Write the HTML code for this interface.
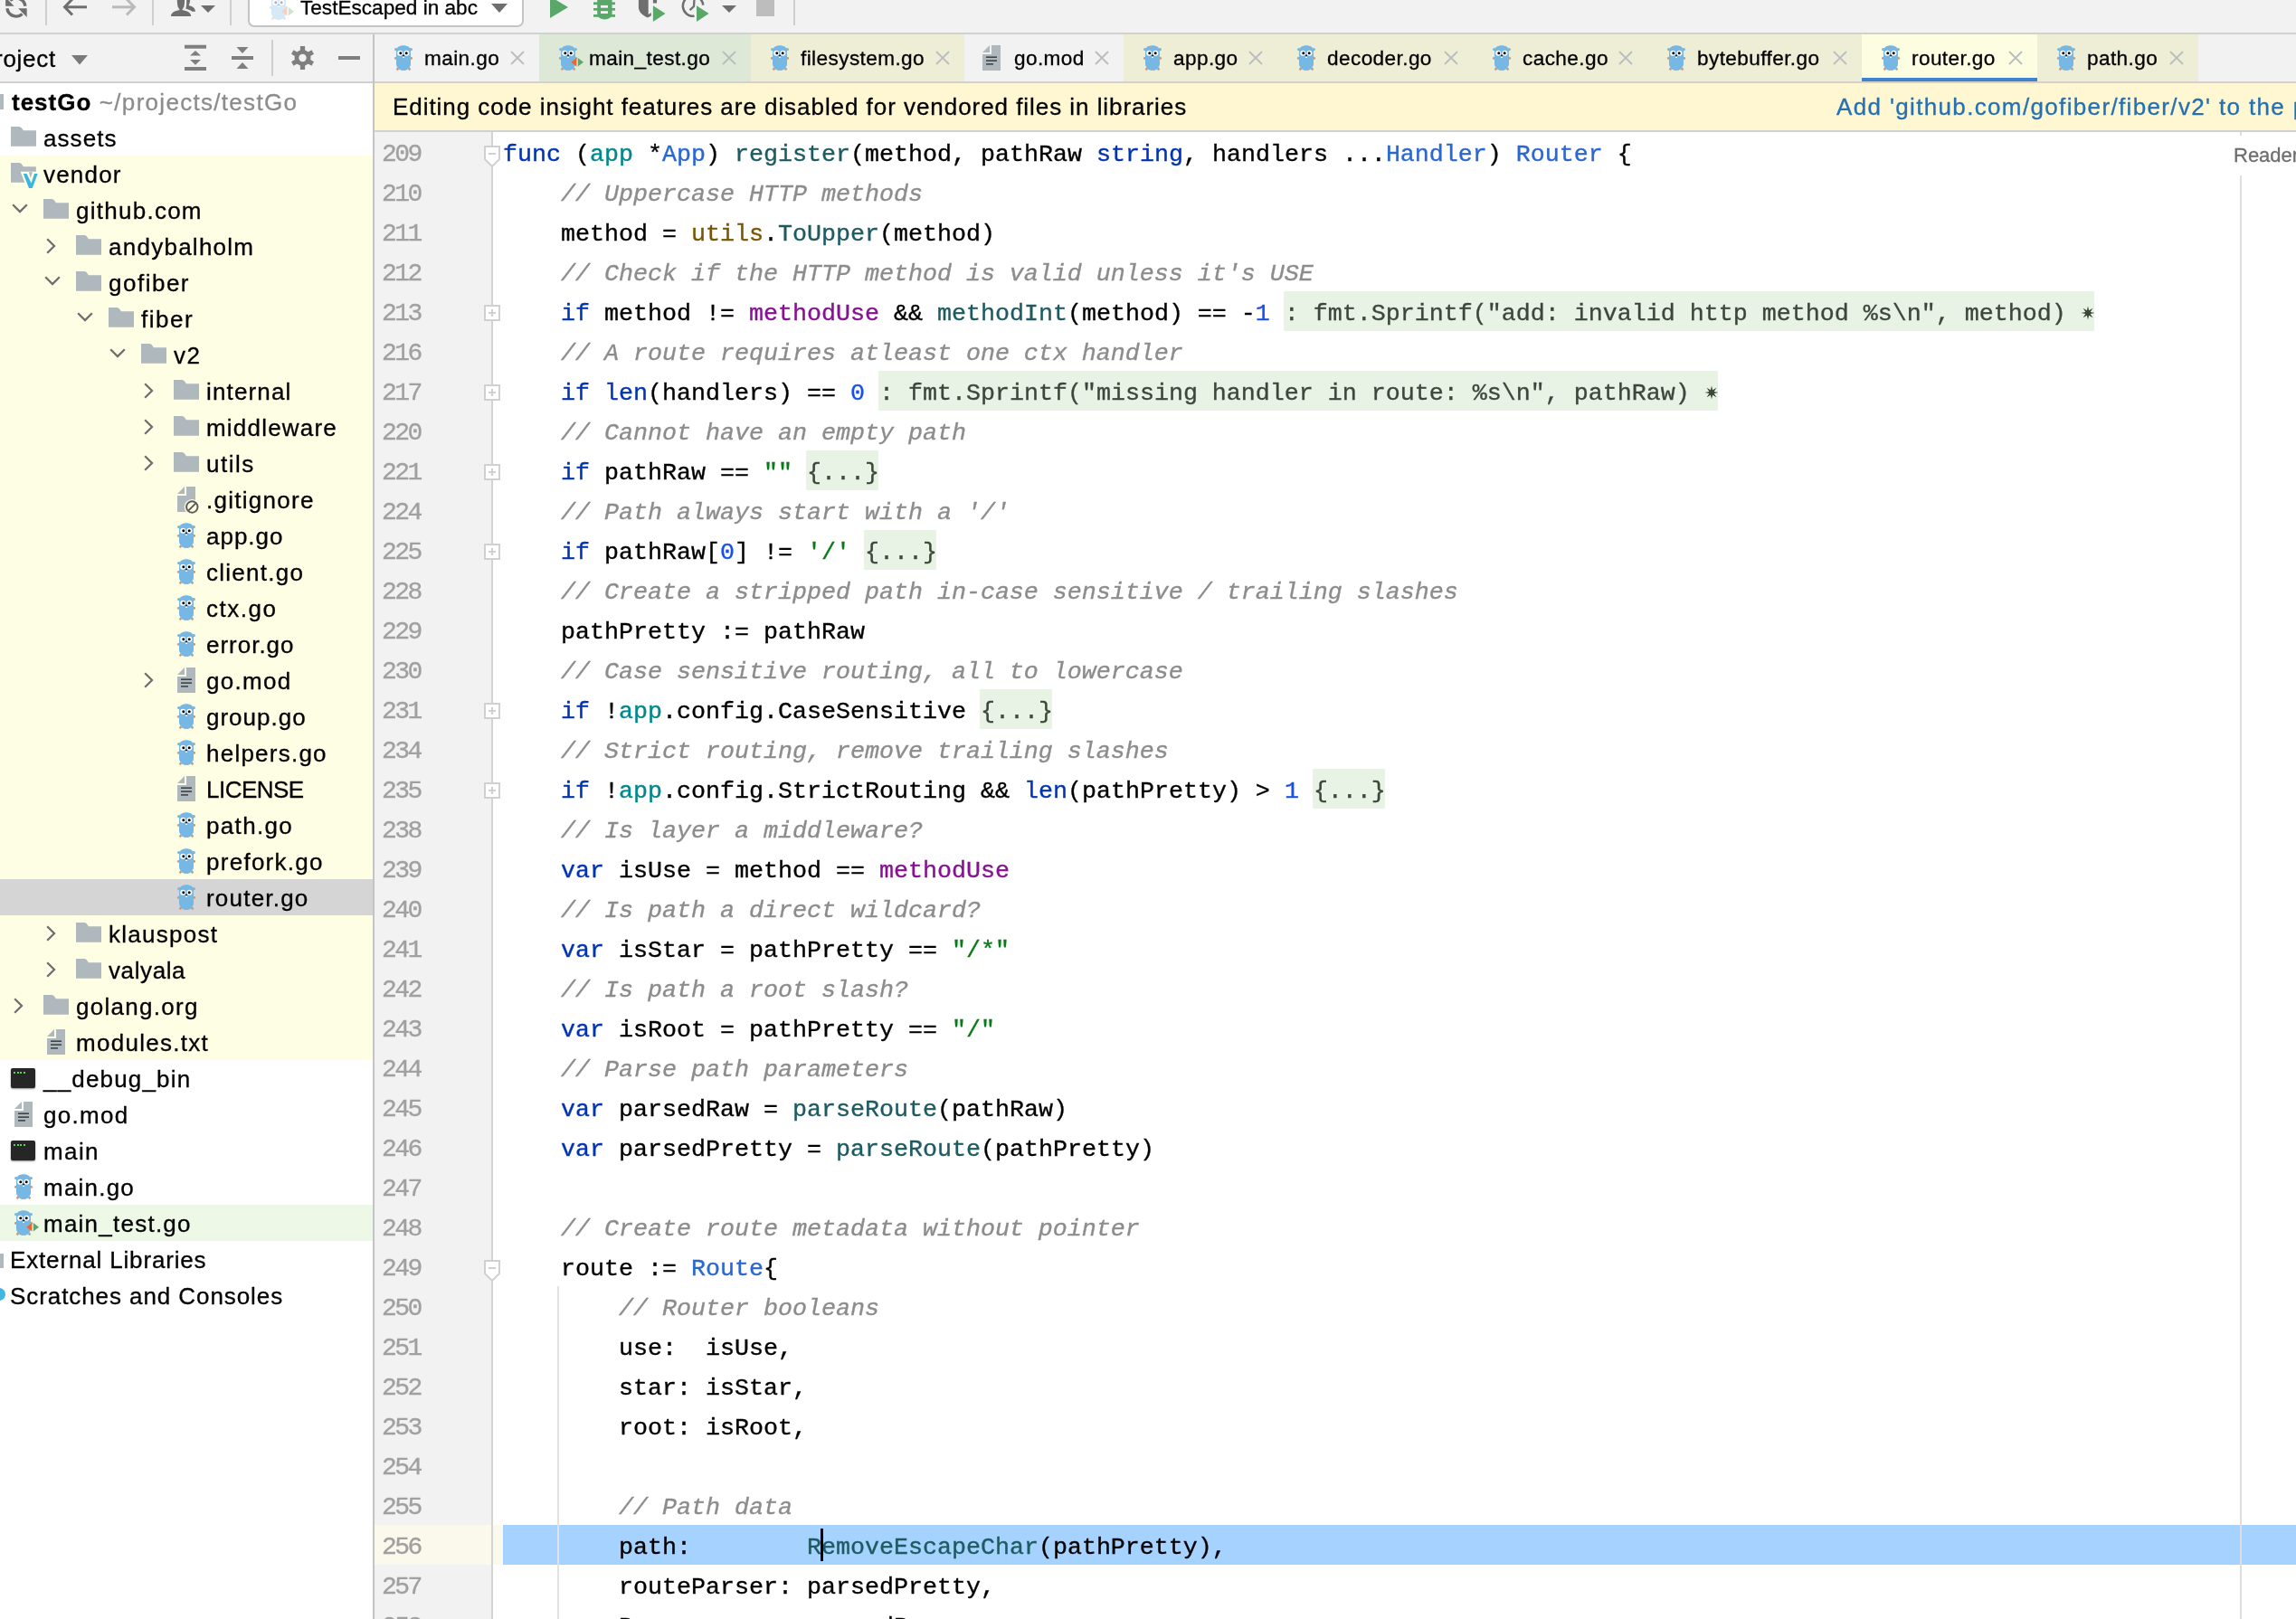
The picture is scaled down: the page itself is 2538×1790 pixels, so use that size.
<!DOCTYPE html><html><head><meta charset="utf-8"><style>
*{box-sizing:border-box;margin:0;padding:0}
html,body{width:2538px;height:1790px;overflow:hidden;background:#f2f2f2}
body{position:relative;font-family:"Liberation Sans",sans-serif;color:#000;-webkit-text-stroke:0.3px currentColor}
.abs{position:absolute}
.tr{position:absolute;left:0;width:412px;height:40px}
.tt{position:absolute;top:0;line-height:42px;font-size:26px;letter-spacing:1.2px;white-space:pre}
.tab{position:absolute;top:38px;height:52px}
.tabt{position:absolute;top:0;line-height:54px;font-size:22.6px;letter-spacing:0.4px;white-space:pre}
.code{position:absolute;left:556px;-webkit-text-stroke:0.35px currentColor;height:44px;line-height:50px;font-family:"Liberation Mono",monospace;font-size:26.667px;white-space:pre;color:#000}
.ln{position:absolute;left:414px;width:70px;height:44px;line-height:49px;font-family:"Liberation Mono",monospace;font-size:28px;letter-spacing:-2.6px;color:#a0a0a0;text-align:left;padding-left:8px}
.k{color:#0033b3}.c{color:#8c8c8c;font-style:italic}.s{color:#067d17}.n{color:#1750eb}
.f{color:#1e5b60}.r{color:#00878c}.t{color:#2a67d1}.p{color:#7a5500}.m{color:#871094}
.fold{position:absolute;height:44px;background:#e8f2e5}
.fd{color:#3c473c}
.close{position:absolute;width:16px;height:16px}
</style></head><body><div style="position:absolute;left:0;top:0;width:2538px;height:1790px;overflow:hidden;will-change:transform;background:#f2f2f2">
<div class="abs" style="left:0;top:0;width:2538px;height:36px;background:#f2f2f2"></div>
<div class="abs" style="left:0;top:36px;width:2538px;height:2px;background:#d1d1d1"></div>
<svg class="abs" style="left:0;top:-6px" width="32" height="32" viewBox="0 -6 32 32"><path d="M7.9,9.3 A10,10 0 0 0 24.6,15.4" fill="none" stroke="#6e6e6e" stroke-width="3.4"/><path d="M20.2,9.3 L29.7,9.3 L29.7,19 Z" fill="#6e6e6e"/><path d="M27.9,6.7 A10,10 0 0 0 11.2,0.6" fill="none" stroke="#6e6e6e" stroke-width="3.4"/><path d="M15.6,6.7 L6.1,6.7 L6.1,-3 Z" fill="#6e6e6e"/></svg>
<div class="abs" style="left:50px;top:0;width:2px;height:28px;background:#cfcfcf"></div>
<svg class="abs" style="left:69px;top:-3px" width="28" height="21" viewBox="0 0 28 21"><path d="M27,10.8 L4,10.8" stroke="#6e6e6e" stroke-width="3"/><path d="M11,2 L2.5,10.8 L11,19.5" fill="none" stroke="#6e6e6e" stroke-width="3"/></svg>
<svg class="abs" style="left:123px;top:-3px" width="28" height="21" viewBox="0 0 28 21"><path d="M1,10.8 L24,10.8" stroke="#bababa" stroke-width="3"/><path d="M17,2 L25.5,10.8 L17,19.5" fill="none" stroke="#bababa" stroke-width="3"/></svg>
<div class="abs" style="left:168px;top:0;width:2px;height:28px;background:#cfcfcf"></div>
<svg class="abs" style="left:180px;top:0" width="40" height="22" viewBox="0 0 40 22"><path d="M26.2,-2 L30.2,-2 C30.2,2 29.5,4.5 28.6,6 C33,7 35.8,9 36,12.7 L32.4,12.7 C31,11.5 28,10.5 25.2,9.6 C26,7.5 26.2,5 26.2,2 Z" fill="#6e6e6e"/><path d="M8.1,18.6 C8.1,14 11,11.5 17.5,10.5 C16,8.5 15.1,6 15.1,2 L15.1,-2 L24.8,-2 L24.8,2 C24.8,6 24,8.5 22.5,10.5 C29,11.5 32,14 32,18.6 Z" fill="#6e6e6e" stroke="#f2f2f2" stroke-width="1.4"/></svg>
<svg class="abs" style="left:222px;top:6px" width="16" height="8" viewBox="0 0 16 8"><path d="M0,0 L16,0 L8,8 Z" fill="#6e6e6e"/></svg>
<div class="abs" style="left:254px;top:0;width:2px;height:28px;background:#cfcfcf"></div>
<div class="abs" style="left:274px;top:-10px;width:305px;height:40px;background:#fff;border:2px solid #c4c4c4;border-radius:7px"></div>
<svg width="28" height="28" viewBox="0 0 28 28" style="opacity:0.3;position:absolute;left:298px;top:-6px">
<circle cx="1.7" cy="4.6" r="1.7" fill="#76b8e3"/><circle cx="18.3" cy="4.6" r="1.7" fill="#76b8e3"/>
<path d="M2.2,5 C3,1.6 6.5,0.4 10,0.4 C13.5,0.4 17,1.6 17.8,5 L18,19 C18,24.5 14.5,27.8 10,27.8 C5.5,27.8 2,24.5 2,19 Z" fill="#76b8e3"/>
<circle cx="1.3" cy="14.4" r="1.4" fill="#c4997f"/><circle cx="18.7" cy="14.4" r="1.4" fill="#c4997f"/>
<circle cx="3.4" cy="26.4" r="1.4" fill="#c4997f"/><circle cx="16.6" cy="26.4" r="1.4" fill="#c4997f"/>
<path d="M2.2,5 C3,1.6 6.5,0.4 10,0.4 C13.5,0.4 17,1.6 17.8,5 L18,19 C18,24.5 14.5,27.8 10,27.8 C5.5,27.8 2,24.5 2,19 Z" fill="#76b8e3"/>
<circle cx="6.2" cy="8.8" r="3" fill="#fff"/><circle cx="13.4" cy="8.8" r="3" fill="#fff"/>
<circle cx="6.8" cy="8.8" r="1.5" fill="#000"/><circle cx="13.2" cy="8.8" r="1.5" fill="#000"/>
<rect x="9.1" y="12" width="1.8" height="2" fill="#fff"/>
<ellipse cx="10" cy="11.5" rx="1.2" ry="0.9" fill="#222"/>
<path d="M19.4,14 L13.3,18.8 L19.4,23.6 Z" fill="#e8672e"/><path d="M20.8,14 L27,18.8 L20.8,23.6 Z" fill="#59a869"/></svg>
<div class="abs" style="left:332px;top:-4px;line-height:26px;font-size:22.6px;letter-spacing:0px;white-space:pre">TestEscaped in abc</div>
<svg class="abs" style="left:543px;top:4px" width="18" height="10" viewBox="0 0 18 10"><path d="M0,0 L18,0 L9,10 Z" fill="#6e6e6e"/></svg>
<svg class="abs" style="left:607px;top:-4px" width="22" height="24" viewBox="0 0 22 24"><path d="M1,0 L21,12 L1,24 Z" fill="#59a869"/></svg>
<svg class="abs" style="left:656px;top:-4px" width="25" height="27" viewBox="0 0 25 27"><path d="M4.2,3 C4.2,-2 20.6,-2 20.6,3 L20.6,19 C20.6,27.5 4.2,27.5 4.2,19 Z" fill="#59a869"/><rect x="0" y="6.4" width="24" height="2.8" fill="#59a869"/><rect x="0" y="13" width="24" height="2.6" fill="#59a869"/><rect x="0" y="20" width="24" height="2.8" fill="#59a869"/><rect x="8" y="9.9" width="8" height="2.8" fill="#f2f2f2"/><rect x="8" y="16.2" width="8" height="2.8" fill="#f2f2f2"/></svg>
<svg class="abs" style="left:705px;top:-6px" width="32" height="31" viewBox="0 0 32 31"><path d="M0.9,0 L21.1,0 L21.1,9.5 L16.9,9.5 L16.9,3.7 L11.7,3.7 L11.7,22 L14.8,19.9 L14.8,23.5 L10.9,25.5 C5,23 0.9,19 0.9,14 Z" fill="#6e6e6e"/><path d="M16.9,12.3 L30.5,21.1 L16.9,30 Z" fill="#59a869"/></svg>
<svg class="abs" style="left:753px;top:-6px" width="32" height="31" viewBox="0 0 32 31"><path d="M14.5,23.7 A11.2,11.2 0 1 1 24.2,11.6" fill="none" stroke="#6e6e6e" stroke-width="2.5"/><path d="M14.5,5 L14,13 L9.6,17.1" fill="none" stroke="#6e6e6e" stroke-width="2.3"/><path d="M17,12.3 L30.6,21.1 L17,30 Z" fill="#59a869"/></svg>
<svg class="abs" style="left:798px;top:6px" width="16" height="8" viewBox="0 0 16 8"><path d="M0,0 L16,0 L8,8 Z" fill="#6e6e6e"/></svg>
<div class="abs" style="left:836px;top:-2px;width:20px;height:20px;background:#bdbdbd"></div>
<div class="abs" style="left:877px;top:0;width:2px;height:28px;background:#cfcfcf"></div>
<div class="abs" style="left:0;top:38px;width:412px;height:52px;background:#f2f2f2"></div>
<div class="abs" style="left:0;top:90px;width:412px;height:2px;background:#d1d1d1"></div>
<div class="abs" style="left:-24px;top:39px;line-height:52px;font-size:26px;letter-spacing:0.7px;white-space:pre">Project</div>
<svg class="abs" style="left:79px;top:61px" width="18" height="11" viewBox="0 0 18 11"><path d="M0,0 L18,0 L9,10.5 Z" fill="#7a7a7a"/></svg>
<svg class="abs" style="left:204px;top:49px" width="24" height="29" viewBox="0 0 24 29"><rect x="0" y="0.7" width="24" height="4" fill="#7f7f7f"/><rect x="0" y="25" width="24" height="4" fill="#7f7f7f"/><path d="M12,7 L18,12.6 L6,12.6 Z" fill="#7f7f7f"/><path d="M12,22.7 L18,17 L6,17 Z" fill="#7f7f7f"/></svg>
<svg class="abs" style="left:256px;top:51px" width="24" height="26" viewBox="0 0 24 26"><rect x="0" y="11" width="24" height="4" fill="#7f7f7f"/><path d="M12,8 L18.5,1 L5.5,1 Z" fill="#7f7f7f"/><path d="M12,18 L18.5,25 L5.5,25 Z" fill="#7f7f7f"/></svg>
<div class="abs" style="left:300px;top:44px;width:2px;height:40px;background:#cfcfcf"></div>
<svg class="abs" style="left:322px;top:51px" width="25" height="26" viewBox="0 0 25 26"><g fill="#7f7f7f" transform="translate(12.5,13)"><circle r="9" /><rect x="-2.6" y="-13" width="5.2" height="26"/><rect x="-2.6" y="-13" width="5.2" height="26" transform="rotate(60)"/><rect x="-2.6" y="-13" width="5.2" height="26" transform="rotate(120)"/></g><circle cx="12.5" cy="13" r="4.2" fill="#f2f2f2"/></svg>
<div class="abs" style="left:374px;top:62px;width:24px;height:4px;background:#7f7f7f"></div>
<div class="abs" style="left:0;top:92px;width:412px;height:1698px;background:#fff"></div>
<div class="abs" style="left:0;top:172px;width:412px;height:1000px;background:#fefee4"></div>
<div class="abs" style="left:0;top:972px;width:412px;height:40px;background:#d5d5d5"></div>
<div class="abs" style="left:0;top:1332px;width:412px;height:40px;background:#eef8e7"></div>
<div class="abs" style="left:0;top:104px;width:4px;height:17px;background:#aeb8bd"></div>
<div class="tt" style="left:13px;top:92px"><b style="letter-spacing:1px">testGo</b><span style="color:#8c8c8c;letter-spacing:1.3px"> ~/projects/testGo</span></div>
<svg width="30" height="30" viewBox="0 0 30 30" style="position:absolute;left:12px;top:140px"><path d="M0,0 L9,0 C11,0 12,1 13.8,4.2 L28,4.2 L28,21.8 L0,21.8 Z" fill="#aeb8bd"/></svg>
<div class="tt" style="left:48px;top:132px;letter-spacing:1.08px">assets</div>
<svg width="30" height="30" viewBox="0 0 30 30" style="position:absolute;left:12px;top:180px"><path d="M0,0 L9,0 C11,0 12,1 13.8,4.2 L27.84,4.2 L27.84,9.67 L10.6,9.67 L15.24,21.8 L0,21.8 Z" fill="#aeb8bd"/><path d="M19.93,10.16 L23.89,10.16 L21.66,16.7 Z" fill="#aeb8bd"/><path d="M13.0,12.0 L16.7,12.0 L21.8,22.4 L25.2,12.0 L28.94,12.0 L22.89,28.08 L19.18,28.08 Z" fill="#3cb4e2" transform="translate(0.8,0)"/></svg>
<div class="tt" style="left:48px;top:172px;letter-spacing:1.2px">vendor</div>
<svg width="18" height="11" viewBox="0 0 18 11" style="position:absolute;left:13px;top:225px"><path d="M1.2,1.2 L9,9 L16.8,1.2" fill="none" stroke="#6e6e6e" stroke-width="2.3"/></svg>
<svg width="30" height="30" viewBox="0 0 30 30" style="position:absolute;left:48px;top:220px"><path d="M0,0 L9,0 C11,0 12,1 13.8,4.2 L28,4.2 L28,21.8 L0,21.8 Z" fill="#aeb8bd"/></svg>
<div class="tt" style="left:84px;top:212px;letter-spacing:1.26px">github.com</div>
<svg width="11" height="18" viewBox="0 0 11 18" style="position:absolute;left:51px;top:263px"><path d="M1.2,1.2 L9,9 L1.2,16.8" fill="none" stroke="#6e6e6e" stroke-width="2.3"/></svg>
<svg width="30" height="30" viewBox="0 0 30 30" style="position:absolute;left:84px;top:260px"><path d="M0,0 L9,0 C11,0 12,1 13.8,4.2 L28,4.2 L28,21.8 L0,21.8 Z" fill="#aeb8bd"/></svg>
<div class="tt" style="left:120px;top:252px;letter-spacing:1.26px">andybalholm</div>
<svg width="18" height="11" viewBox="0 0 18 11" style="position:absolute;left:49px;top:305px"><path d="M1.2,1.2 L9,9 L16.8,1.2" fill="none" stroke="#6e6e6e" stroke-width="2.3"/></svg>
<svg width="30" height="30" viewBox="0 0 30 30" style="position:absolute;left:84px;top:300px"><path d="M0,0 L9,0 C11,0 12,1 13.8,4.2 L28,4.2 L28,21.8 L0,21.8 Z" fill="#aeb8bd"/></svg>
<div class="tt" style="left:120px;top:292px;letter-spacing:1.5px">gofiber</div>
<svg width="18" height="11" viewBox="0 0 18 11" style="position:absolute;left:85px;top:345px"><path d="M1.2,1.2 L9,9 L16.8,1.2" fill="none" stroke="#6e6e6e" stroke-width="2.3"/></svg>
<svg width="30" height="30" viewBox="0 0 30 30" style="position:absolute;left:120px;top:340px"><path d="M0,0 L9,0 C11,0 12,1 13.8,4.2 L28,4.2 L28,21.8 L0,21.8 Z" fill="#aeb8bd"/></svg>
<div class="tt" style="left:156px;top:332px;letter-spacing:1.5px">fiber</div>
<svg width="18" height="11" viewBox="0 0 18 11" style="position:absolute;left:121px;top:385px"><path d="M1.2,1.2 L9,9 L16.8,1.2" fill="none" stroke="#6e6e6e" stroke-width="2.3"/></svg>
<svg width="30" height="30" viewBox="0 0 30 30" style="position:absolute;left:156px;top:380px"><path d="M0,0 L9,0 C11,0 12,1 13.8,4.2 L28,4.2 L28,21.8 L0,21.8 Z" fill="#aeb8bd"/></svg>
<div class="tt" style="left:192px;top:372px;letter-spacing:1.5px">v2</div>
<svg width="11" height="18" viewBox="0 0 11 18" style="position:absolute;left:159px;top:423px"><path d="M1.2,1.2 L9,9 L1.2,16.8" fill="none" stroke="#6e6e6e" stroke-width="2.3"/></svg>
<svg width="30" height="30" viewBox="0 0 30 30" style="position:absolute;left:192px;top:420px"><path d="M0,0 L9,0 C11,0 12,1 13.8,4.2 L28,4.2 L28,21.8 L0,21.8 Z" fill="#aeb8bd"/></svg>
<div class="tt" style="left:228px;top:412px;letter-spacing:1.14px">internal</div>
<svg width="11" height="18" viewBox="0 0 11 18" style="position:absolute;left:159px;top:463px"><path d="M1.2,1.2 L9,9 L1.2,16.8" fill="none" stroke="#6e6e6e" stroke-width="2.3"/></svg>
<svg width="30" height="30" viewBox="0 0 30 30" style="position:absolute;left:192px;top:460px"><path d="M0,0 L9,0 C11,0 12,1 13.8,4.2 L28,4.2 L28,21.8 L0,21.8 Z" fill="#aeb8bd"/></svg>
<div class="tt" style="left:228px;top:452px;letter-spacing:1.2px">middleware</div>
<svg width="11" height="18" viewBox="0 0 11 18" style="position:absolute;left:159px;top:503px"><path d="M1.2,1.2 L9,9 L1.2,16.8" fill="none" stroke="#6e6e6e" stroke-width="2.3"/></svg>
<svg width="30" height="30" viewBox="0 0 30 30" style="position:absolute;left:192px;top:500px"><path d="M0,0 L9,0 C11,0 12,1 13.8,4.2 L28,4.2 L28,21.8 L0,21.8 Z" fill="#aeb8bd"/></svg>
<div class="tt" style="left:228px;top:492px;letter-spacing:1.5px">utils</div>
<svg width="26" height="32" viewBox="0 0 26 32" style="position:absolute;left:196px;top:538px"><path d="M0,10 L10,10 L10,0 L20,0 L20,28 L0,28 Z" fill="#aeb8bd"/><path d="M0,8 L8,0 L8,8 Z" fill="#aeb8bd"/><circle cx="16.3" cy="22.5" r="8.6" fill="#fefee4"/><circle cx="16.3" cy="22.5" r="6.2" fill="none" stroke="#5a5a5a" stroke-width="2"/><path d="M11.9,26.9 L20.7,18.1" stroke="#5a5a5a" stroke-width="2"/></svg>
<div class="tt" style="left:228px;top:532px;letter-spacing:1.28px">.gitignore</div>
<svg width="28" height="28" viewBox="0 0 28 28" style="position:absolute;left:196px;top:578px">
<circle cx="1.7" cy="4.6" r="1.7" fill="#76b8e3"/><circle cx="18.3" cy="4.6" r="1.7" fill="#76b8e3"/>
<path d="M2.2,5 C3,1.6 6.5,0.4 10,0.4 C13.5,0.4 17,1.6 17.8,5 L18,19 C18,24.5 14.5,27.8 10,27.8 C5.5,27.8 2,24.5 2,19 Z" fill="#76b8e3"/>
<circle cx="1.3" cy="14.4" r="1.4" fill="#c4997f"/><circle cx="18.7" cy="14.4" r="1.4" fill="#c4997f"/>
<circle cx="3.4" cy="26.4" r="1.4" fill="#c4997f"/><circle cx="16.6" cy="26.4" r="1.4" fill="#c4997f"/>
<path d="M2.2,5 C3,1.6 6.5,0.4 10,0.4 C13.5,0.4 17,1.6 17.8,5 L18,19 C18,24.5 14.5,27.8 10,27.8 C5.5,27.8 2,24.5 2,19 Z" fill="#76b8e3"/>
<circle cx="6.2" cy="8.8" r="3" fill="#fff"/><circle cx="13.4" cy="8.8" r="3" fill="#fff"/>
<circle cx="6.8" cy="8.8" r="1.5" fill="#000"/><circle cx="13.2" cy="8.8" r="1.5" fill="#000"/>
<rect x="9.1" y="12" width="1.8" height="2" fill="#fff"/>
<ellipse cx="10" cy="11.5" rx="1.2" ry="0.9" fill="#222"/>
</svg>
<div class="tt" style="left:228px;top:572px;letter-spacing:0.98px">app.go</div>
<svg width="28" height="28" viewBox="0 0 28 28" style="position:absolute;left:196px;top:618px">
<circle cx="1.7" cy="4.6" r="1.7" fill="#76b8e3"/><circle cx="18.3" cy="4.6" r="1.7" fill="#76b8e3"/>
<path d="M2.2,5 C3,1.6 6.5,0.4 10,0.4 C13.5,0.4 17,1.6 17.8,5 L18,19 C18,24.5 14.5,27.8 10,27.8 C5.5,27.8 2,24.5 2,19 Z" fill="#76b8e3"/>
<circle cx="1.3" cy="14.4" r="1.4" fill="#c4997f"/><circle cx="18.7" cy="14.4" r="1.4" fill="#c4997f"/>
<circle cx="3.4" cy="26.4" r="1.4" fill="#c4997f"/><circle cx="16.6" cy="26.4" r="1.4" fill="#c4997f"/>
<path d="M2.2,5 C3,1.6 6.5,0.4 10,0.4 C13.5,0.4 17,1.6 17.8,5 L18,19 C18,24.5 14.5,27.8 10,27.8 C5.5,27.8 2,24.5 2,19 Z" fill="#76b8e3"/>
<circle cx="6.2" cy="8.8" r="3" fill="#fff"/><circle cx="13.4" cy="8.8" r="3" fill="#fff"/>
<circle cx="6.8" cy="8.8" r="1.5" fill="#000"/><circle cx="13.2" cy="8.8" r="1.5" fill="#000"/>
<rect x="9.1" y="12" width="1.8" height="2" fill="#fff"/>
<ellipse cx="10" cy="11.5" rx="1.2" ry="0.9" fill="#222"/>
</svg>
<div class="tt" style="left:228px;top:612px;letter-spacing:1.26px">client.go</div>
<svg width="28" height="28" viewBox="0 0 28 28" style="position:absolute;left:196px;top:658px">
<circle cx="1.7" cy="4.6" r="1.7" fill="#76b8e3"/><circle cx="18.3" cy="4.6" r="1.7" fill="#76b8e3"/>
<path d="M2.2,5 C3,1.6 6.5,0.4 10,0.4 C13.5,0.4 17,1.6 17.8,5 L18,19 C18,24.5 14.5,27.8 10,27.8 C5.5,27.8 2,24.5 2,19 Z" fill="#76b8e3"/>
<circle cx="1.3" cy="14.4" r="1.4" fill="#c4997f"/><circle cx="18.7" cy="14.4" r="1.4" fill="#c4997f"/>
<circle cx="3.4" cy="26.4" r="1.4" fill="#c4997f"/><circle cx="16.6" cy="26.4" r="1.4" fill="#c4997f"/>
<path d="M2.2,5 C3,1.6 6.5,0.4 10,0.4 C13.5,0.4 17,1.6 17.8,5 L18,19 C18,24.5 14.5,27.8 10,27.8 C5.5,27.8 2,24.5 2,19 Z" fill="#76b8e3"/>
<circle cx="6.2" cy="8.8" r="3" fill="#fff"/><circle cx="13.4" cy="8.8" r="3" fill="#fff"/>
<circle cx="6.8" cy="8.8" r="1.5" fill="#000"/><circle cx="13.2" cy="8.8" r="1.5" fill="#000"/>
<rect x="9.1" y="12" width="1.8" height="2" fill="#fff"/>
<ellipse cx="10" cy="11.5" rx="1.2" ry="0.9" fill="#222"/>
</svg>
<div class="tt" style="left:228px;top:652px;letter-spacing:1.5px">ctx.go</div>
<svg width="28" height="28" viewBox="0 0 28 28" style="position:absolute;left:196px;top:698px">
<circle cx="1.7" cy="4.6" r="1.7" fill="#76b8e3"/><circle cx="18.3" cy="4.6" r="1.7" fill="#76b8e3"/>
<path d="M2.2,5 C3,1.6 6.5,0.4 10,0.4 C13.5,0.4 17,1.6 17.8,5 L18,19 C18,24.5 14.5,27.8 10,27.8 C5.5,27.8 2,24.5 2,19 Z" fill="#76b8e3"/>
<circle cx="1.3" cy="14.4" r="1.4" fill="#c4997f"/><circle cx="18.7" cy="14.4" r="1.4" fill="#c4997f"/>
<circle cx="3.4" cy="26.4" r="1.4" fill="#c4997f"/><circle cx="16.6" cy="26.4" r="1.4" fill="#c4997f"/>
<path d="M2.2,5 C3,1.6 6.5,0.4 10,0.4 C13.5,0.4 17,1.6 17.8,5 L18,19 C18,24.5 14.5,27.8 10,27.8 C5.5,27.8 2,24.5 2,19 Z" fill="#76b8e3"/>
<circle cx="6.2" cy="8.8" r="3" fill="#fff"/><circle cx="13.4" cy="8.8" r="3" fill="#fff"/>
<circle cx="6.8" cy="8.8" r="1.5" fill="#000"/><circle cx="13.2" cy="8.8" r="1.5" fill="#000"/>
<rect x="9.1" y="12" width="1.8" height="2" fill="#fff"/>
<ellipse cx="10" cy="11.5" rx="1.2" ry="0.9" fill="#222"/>
</svg>
<div class="tt" style="left:228px;top:692px;letter-spacing:0.99px">error.go</div>
<svg width="11" height="18" viewBox="0 0 11 18" style="position:absolute;left:159px;top:743px"><path d="M1.2,1.2 L9,9 L1.2,16.8" fill="none" stroke="#6e6e6e" stroke-width="2.3"/></svg>
<svg width="26" height="32" viewBox="0 0 26 32" style="position:absolute;left:196px;top:738px"><path d="M0,10 L10,10 L10,0 L20,0 L20,28 L0,28 Z" fill="#aeb8bd"/><path d="M0,8 L8,0 L8,8 Z" fill="#aeb8bd"/><rect x="4" y="12.4" width="12" height="1.6" fill="#3f4448"/><rect x="4" y="16.3" width="12" height="1.6" fill="#3f4448"/><rect x="4" y="20.1" width="8" height="1.6" fill="#3f4448"/></svg>
<div class="tt" style="left:228px;top:732px;letter-spacing:1.32px">go.mod</div>
<svg width="28" height="28" viewBox="0 0 28 28" style="position:absolute;left:196px;top:778px">
<circle cx="1.7" cy="4.6" r="1.7" fill="#76b8e3"/><circle cx="18.3" cy="4.6" r="1.7" fill="#76b8e3"/>
<path d="M2.2,5 C3,1.6 6.5,0.4 10,0.4 C13.5,0.4 17,1.6 17.8,5 L18,19 C18,24.5 14.5,27.8 10,27.8 C5.5,27.8 2,24.5 2,19 Z" fill="#76b8e3"/>
<circle cx="1.3" cy="14.4" r="1.4" fill="#c4997f"/><circle cx="18.7" cy="14.4" r="1.4" fill="#c4997f"/>
<circle cx="3.4" cy="26.4" r="1.4" fill="#c4997f"/><circle cx="16.6" cy="26.4" r="1.4" fill="#c4997f"/>
<path d="M2.2,5 C3,1.6 6.5,0.4 10,0.4 C13.5,0.4 17,1.6 17.8,5 L18,19 C18,24.5 14.5,27.8 10,27.8 C5.5,27.8 2,24.5 2,19 Z" fill="#76b8e3"/>
<circle cx="6.2" cy="8.8" r="3" fill="#fff"/><circle cx="13.4" cy="8.8" r="3" fill="#fff"/>
<circle cx="6.8" cy="8.8" r="1.5" fill="#000"/><circle cx="13.2" cy="8.8" r="1.5" fill="#000"/>
<rect x="9.1" y="12" width="1.8" height="2" fill="#fff"/>
<ellipse cx="10" cy="11.5" rx="1.2" ry="0.9" fill="#222"/>
</svg>
<div class="tt" style="left:228px;top:772px;letter-spacing:1.0px">group.go</div>
<svg width="28" height="28" viewBox="0 0 28 28" style="position:absolute;left:196px;top:818px">
<circle cx="1.7" cy="4.6" r="1.7" fill="#76b8e3"/><circle cx="18.3" cy="4.6" r="1.7" fill="#76b8e3"/>
<path d="M2.2,5 C3,1.6 6.5,0.4 10,0.4 C13.5,0.4 17,1.6 17.8,5 L18,19 C18,24.5 14.5,27.8 10,27.8 C5.5,27.8 2,24.5 2,19 Z" fill="#76b8e3"/>
<circle cx="1.3" cy="14.4" r="1.4" fill="#c4997f"/><circle cx="18.7" cy="14.4" r="1.4" fill="#c4997f"/>
<circle cx="3.4" cy="26.4" r="1.4" fill="#c4997f"/><circle cx="16.6" cy="26.4" r="1.4" fill="#c4997f"/>
<path d="M2.2,5 C3,1.6 6.5,0.4 10,0.4 C13.5,0.4 17,1.6 17.8,5 L18,19 C18,24.5 14.5,27.8 10,27.8 C5.5,27.8 2,24.5 2,19 Z" fill="#76b8e3"/>
<circle cx="6.2" cy="8.8" r="3" fill="#fff"/><circle cx="13.4" cy="8.8" r="3" fill="#fff"/>
<circle cx="6.8" cy="8.8" r="1.5" fill="#000"/><circle cx="13.2" cy="8.8" r="1.5" fill="#000"/>
<rect x="9.1" y="12" width="1.8" height="2" fill="#fff"/>
<ellipse cx="10" cy="11.5" rx="1.2" ry="0.9" fill="#222"/>
</svg>
<div class="tt" style="left:228px;top:812px;letter-spacing:1.24px">helpers.go</div>
<svg width="26" height="32" viewBox="0 0 26 32" style="position:absolute;left:196px;top:858px"><path d="M0,10 L10,10 L10,0 L20,0 L20,28 L0,28 Z" fill="#aeb8bd"/><path d="M0,8 L8,0 L8,8 Z" fill="#aeb8bd"/><rect x="4" y="12.4" width="12" height="1.6" fill="#3f4448"/><rect x="4" y="16.3" width="12" height="1.6" fill="#3f4448"/><rect x="4" y="20.1" width="8" height="1.6" fill="#3f4448"/></svg>
<div class="tt" style="left:228px;top:852px;letter-spacing:-0.52px">LICENSE</div>
<svg width="28" height="28" viewBox="0 0 28 28" style="position:absolute;left:196px;top:898px">
<circle cx="1.7" cy="4.6" r="1.7" fill="#76b8e3"/><circle cx="18.3" cy="4.6" r="1.7" fill="#76b8e3"/>
<path d="M2.2,5 C3,1.6 6.5,0.4 10,0.4 C13.5,0.4 17,1.6 17.8,5 L18,19 C18,24.5 14.5,27.8 10,27.8 C5.5,27.8 2,24.5 2,19 Z" fill="#76b8e3"/>
<circle cx="1.3" cy="14.4" r="1.4" fill="#c4997f"/><circle cx="18.7" cy="14.4" r="1.4" fill="#c4997f"/>
<circle cx="3.4" cy="26.4" r="1.4" fill="#c4997f"/><circle cx="16.6" cy="26.4" r="1.4" fill="#c4997f"/>
<path d="M2.2,5 C3,1.6 6.5,0.4 10,0.4 C13.5,0.4 17,1.6 17.8,5 L18,19 C18,24.5 14.5,27.8 10,27.8 C5.5,27.8 2,24.5 2,19 Z" fill="#76b8e3"/>
<circle cx="6.2" cy="8.8" r="3" fill="#fff"/><circle cx="13.4" cy="8.8" r="3" fill="#fff"/>
<circle cx="6.8" cy="8.8" r="1.5" fill="#000"/><circle cx="13.2" cy="8.8" r="1.5" fill="#000"/>
<rect x="9.1" y="12" width="1.8" height="2" fill="#fff"/>
<ellipse cx="10" cy="11.5" rx="1.2" ry="0.9" fill="#222"/>
</svg>
<div class="tt" style="left:228px;top:892px;letter-spacing:1.33px">path.go</div>
<svg width="28" height="28" viewBox="0 0 28 28" style="position:absolute;left:196px;top:938px">
<circle cx="1.7" cy="4.6" r="1.7" fill="#76b8e3"/><circle cx="18.3" cy="4.6" r="1.7" fill="#76b8e3"/>
<path d="M2.2,5 C3,1.6 6.5,0.4 10,0.4 C13.5,0.4 17,1.6 17.8,5 L18,19 C18,24.5 14.5,27.8 10,27.8 C5.5,27.8 2,24.5 2,19 Z" fill="#76b8e3"/>
<circle cx="1.3" cy="14.4" r="1.4" fill="#c4997f"/><circle cx="18.7" cy="14.4" r="1.4" fill="#c4997f"/>
<circle cx="3.4" cy="26.4" r="1.4" fill="#c4997f"/><circle cx="16.6" cy="26.4" r="1.4" fill="#c4997f"/>
<path d="M2.2,5 C3,1.6 6.5,0.4 10,0.4 C13.5,0.4 17,1.6 17.8,5 L18,19 C18,24.5 14.5,27.8 10,27.8 C5.5,27.8 2,24.5 2,19 Z" fill="#76b8e3"/>
<circle cx="6.2" cy="8.8" r="3" fill="#fff"/><circle cx="13.4" cy="8.8" r="3" fill="#fff"/>
<circle cx="6.8" cy="8.8" r="1.5" fill="#000"/><circle cx="13.2" cy="8.8" r="1.5" fill="#000"/>
<rect x="9.1" y="12" width="1.8" height="2" fill="#fff"/>
<ellipse cx="10" cy="11.5" rx="1.2" ry="0.9" fill="#222"/>
</svg>
<div class="tt" style="left:228px;top:932px;letter-spacing:1.27px">prefork.go</div>
<svg width="28" height="28" viewBox="0 0 28 28" style="position:absolute;left:196px;top:978px">
<circle cx="1.7" cy="4.6" r="1.7" fill="#76b8e3"/><circle cx="18.3" cy="4.6" r="1.7" fill="#76b8e3"/>
<path d="M2.2,5 C3,1.6 6.5,0.4 10,0.4 C13.5,0.4 17,1.6 17.8,5 L18,19 C18,24.5 14.5,27.8 10,27.8 C5.5,27.8 2,24.5 2,19 Z" fill="#76b8e3"/>
<circle cx="1.3" cy="14.4" r="1.4" fill="#c4997f"/><circle cx="18.7" cy="14.4" r="1.4" fill="#c4997f"/>
<circle cx="3.4" cy="26.4" r="1.4" fill="#c4997f"/><circle cx="16.6" cy="26.4" r="1.4" fill="#c4997f"/>
<path d="M2.2,5 C3,1.6 6.5,0.4 10,0.4 C13.5,0.4 17,1.6 17.8,5 L18,19 C18,24.5 14.5,27.8 10,27.8 C5.5,27.8 2,24.5 2,19 Z" fill="#76b8e3"/>
<circle cx="6.2" cy="8.8" r="3" fill="#fff"/><circle cx="13.4" cy="8.8" r="3" fill="#fff"/>
<circle cx="6.8" cy="8.8" r="1.5" fill="#000"/><circle cx="13.2" cy="8.8" r="1.5" fill="#000"/>
<rect x="9.1" y="12" width="1.8" height="2" fill="#fff"/>
<ellipse cx="10" cy="11.5" rx="1.2" ry="0.9" fill="#222"/>
</svg>
<div class="tt" style="left:228px;top:972px;letter-spacing:1.21px">router.go</div>
<svg width="11" height="18" viewBox="0 0 11 18" style="position:absolute;left:51px;top:1023px"><path d="M1.2,1.2 L9,9 L1.2,16.8" fill="none" stroke="#6e6e6e" stroke-width="2.3"/></svg>
<svg width="30" height="30" viewBox="0 0 30 30" style="position:absolute;left:84px;top:1020px"><path d="M0,0 L9,0 C11,0 12,1 13.8,4.2 L28,4.2 L28,21.8 L0,21.8 Z" fill="#aeb8bd"/></svg>
<div class="tt" style="left:120px;top:1012px;letter-spacing:1.26px">klauspost</div>
<svg width="11" height="18" viewBox="0 0 11 18" style="position:absolute;left:51px;top:1063px"><path d="M1.2,1.2 L9,9 L1.2,16.8" fill="none" stroke="#6e6e6e" stroke-width="2.3"/></svg>
<svg width="30" height="30" viewBox="0 0 30 30" style="position:absolute;left:84px;top:1060px"><path d="M0,0 L9,0 C11,0 12,1 13.8,4.2 L28,4.2 L28,21.8 L0,21.8 Z" fill="#aeb8bd"/></svg>
<div class="tt" style="left:120px;top:1052px;letter-spacing:0.6px">valyala</div>
<svg width="11" height="18" viewBox="0 0 11 18" style="position:absolute;left:15px;top:1103px"><path d="M1.2,1.2 L9,9 L1.2,16.8" fill="none" stroke="#6e6e6e" stroke-width="2.3"/></svg>
<svg width="30" height="30" viewBox="0 0 30 30" style="position:absolute;left:48px;top:1100px"><path d="M0,0 L9,0 C11,0 12,1 13.8,4.2 L28,4.2 L28,21.8 L0,21.8 Z" fill="#aeb8bd"/></svg>
<div class="tt" style="left:84px;top:1092px;letter-spacing:1.28px">golang.org</div>
<svg width="26" height="32" viewBox="0 0 26 32" style="position:absolute;left:52px;top:1138px"><path d="M0,10 L10,10 L10,0 L20,0 L20,28 L0,28 Z" fill="#aeb8bd"/><path d="M0,8 L8,0 L8,8 Z" fill="#aeb8bd"/><rect x="4" y="12.4" width="12" height="1.6" fill="#3f4448"/><rect x="4" y="16.3" width="12" height="1.6" fill="#3f4448"/><rect x="4" y="20.1" width="8" height="1.6" fill="#3f4448"/></svg>
<div class="tt" style="left:84px;top:1132px;letter-spacing:1.29px">modules.txt</div>
<div style="position:absolute;left:12px;top:1181px;width:27px;height:22px;background:#262626;border-radius:2px;box-shadow:0 1px 2px rgba(0,0,0,.45)"><div style="position:absolute;left:3px;top:4px;width:13px;height:2px;background:repeating-linear-gradient(90deg,#5fd35f 0 2px,transparent 2px 3.5px)"></div></div>
<div class="tt" style="left:48px;top:1172px;letter-spacing:1.18px">__debug_bin</div>
<svg width="26" height="32" viewBox="0 0 26 32" style="position:absolute;left:16px;top:1218px"><path d="M0,10 L10,10 L10,0 L20,0 L20,28 L0,28 Z" fill="#aeb8bd"/><path d="M0,8 L8,0 L8,8 Z" fill="#aeb8bd"/><rect x="4" y="12.4" width="12" height="1.6" fill="#3f4448"/><rect x="4" y="16.3" width="12" height="1.6" fill="#3f4448"/><rect x="4" y="20.1" width="8" height="1.6" fill="#3f4448"/></svg>
<div class="tt" style="left:48px;top:1212px;letter-spacing:1.32px">go.mod</div>
<div style="position:absolute;left:12px;top:1261px;width:27px;height:22px;background:#262626;border-radius:2px;box-shadow:0 1px 2px rgba(0,0,0,.45)"><div style="position:absolute;left:3px;top:4px;width:13px;height:2px;background:repeating-linear-gradient(90deg,#5fd35f 0 2px,transparent 2px 3.5px)"></div></div>
<div class="tt" style="left:48px;top:1252px;letter-spacing:1.4px">main</div>
<svg width="28" height="28" viewBox="0 0 28 28" style="position:absolute;left:16px;top:1298px">
<circle cx="1.7" cy="4.6" r="1.7" fill="#76b8e3"/><circle cx="18.3" cy="4.6" r="1.7" fill="#76b8e3"/>
<path d="M2.2,5 C3,1.6 6.5,0.4 10,0.4 C13.5,0.4 17,1.6 17.8,5 L18,19 C18,24.5 14.5,27.8 10,27.8 C5.5,27.8 2,24.5 2,19 Z" fill="#76b8e3"/>
<circle cx="1.3" cy="14.4" r="1.4" fill="#c4997f"/><circle cx="18.7" cy="14.4" r="1.4" fill="#c4997f"/>
<circle cx="3.4" cy="26.4" r="1.4" fill="#c4997f"/><circle cx="16.6" cy="26.4" r="1.4" fill="#c4997f"/>
<path d="M2.2,5 C3,1.6 6.5,0.4 10,0.4 C13.5,0.4 17,1.6 17.8,5 L18,19 C18,24.5 14.5,27.8 10,27.8 C5.5,27.8 2,24.5 2,19 Z" fill="#76b8e3"/>
<circle cx="6.2" cy="8.8" r="3" fill="#fff"/><circle cx="13.4" cy="8.8" r="3" fill="#fff"/>
<circle cx="6.8" cy="8.8" r="1.5" fill="#000"/><circle cx="13.2" cy="8.8" r="1.5" fill="#000"/>
<rect x="9.1" y="12" width="1.8" height="2" fill="#fff"/>
<ellipse cx="10" cy="11.5" rx="1.2" ry="0.9" fill="#222"/>
</svg>
<div class="tt" style="left:48px;top:1292px;letter-spacing:1.22px">main.go</div>
<svg width="28" height="28" viewBox="0 0 28 28" style="position:absolute;left:16px;top:1338px">
<circle cx="1.7" cy="4.6" r="1.7" fill="#76b8e3"/><circle cx="18.3" cy="4.6" r="1.7" fill="#76b8e3"/>
<path d="M2.2,5 C3,1.6 6.5,0.4 10,0.4 C13.5,0.4 17,1.6 17.8,5 L18,19 C18,24.5 14.5,27.8 10,27.8 C5.5,27.8 2,24.5 2,19 Z" fill="#76b8e3"/>
<circle cx="1.3" cy="14.4" r="1.4" fill="#c4997f"/><circle cx="18.7" cy="14.4" r="1.4" fill="#c4997f"/>
<circle cx="3.4" cy="26.4" r="1.4" fill="#c4997f"/><circle cx="16.6" cy="26.4" r="1.4" fill="#c4997f"/>
<path d="M2.2,5 C3,1.6 6.5,0.4 10,0.4 C13.5,0.4 17,1.6 17.8,5 L18,19 C18,24.5 14.5,27.8 10,27.8 C5.5,27.8 2,24.5 2,19 Z" fill="#76b8e3"/>
<circle cx="6.2" cy="8.8" r="3" fill="#fff"/><circle cx="13.4" cy="8.8" r="3" fill="#fff"/>
<circle cx="6.8" cy="8.8" r="1.5" fill="#000"/><circle cx="13.2" cy="8.8" r="1.5" fill="#000"/>
<rect x="9.1" y="12" width="1.8" height="2" fill="#fff"/>
<ellipse cx="10" cy="11.5" rx="1.2" ry="0.9" fill="#222"/>
<path d="M19.4,14 L13.3,18.8 L19.4,23.6 Z" fill="#e8672e"/><path d="M20.8,14 L27,18.8 L20.8,23.6 Z" fill="#59a869"/></svg>
<div class="tt" style="left:48px;top:1332px;letter-spacing:1.24px">main_test.go</div>
<div class="abs" style="left:0;top:1386px;width:4px;height:16px;background:#aeb8bd"></div>
<div class="tt" style="left:11px;top:1372px;letter-spacing:0.84px">External Libraries</div>
<div class="abs" style="left:-8px;top:1424px;width:14px;height:14px;border-radius:7px;background:#40b6e0"></div>
<div class="tt" style="left:11px;top:1412px;letter-spacing:0.92px">Scratches and Consoles</div>
<div class="abs" style="left:412px;top:38px;width:2px;height:1752px;background:#c4c4c4"></div>
<div class="abs" style="left:414px;top:38px;width:2124px;height:52px;background:#f2f2f2"></div>
<div class="tab" style="left:414px;width:182px;background:#f2f2f2"></div>
<svg width="28" height="28" viewBox="0 0 28 28" style="position:absolute;left:436px;top:50px">
<circle cx="1.7" cy="4.6" r="1.7" fill="#76b8e3"/><circle cx="18.3" cy="4.6" r="1.7" fill="#76b8e3"/>
<path d="M2.2,5 C3,1.6 6.5,0.4 10,0.4 C13.5,0.4 17,1.6 17.8,5 L18,19 C18,24.5 14.5,27.8 10,27.8 C5.5,27.8 2,24.5 2,19 Z" fill="#76b8e3"/>
<circle cx="1.3" cy="14.4" r="1.4" fill="#c4997f"/><circle cx="18.7" cy="14.4" r="1.4" fill="#c4997f"/>
<circle cx="3.4" cy="26.4" r="1.4" fill="#c4997f"/><circle cx="16.6" cy="26.4" r="1.4" fill="#c4997f"/>
<path d="M2.2,5 C3,1.6 6.5,0.4 10,0.4 C13.5,0.4 17,1.6 17.8,5 L18,19 C18,24.5 14.5,27.8 10,27.8 C5.5,27.8 2,24.5 2,19 Z" fill="#76b8e3"/>
<circle cx="6.2" cy="8.8" r="3" fill="#fff"/><circle cx="13.4" cy="8.8" r="3" fill="#fff"/>
<circle cx="6.8" cy="8.8" r="1.5" fill="#000"/><circle cx="13.2" cy="8.8" r="1.5" fill="#000"/>
<rect x="9.1" y="12" width="1.8" height="2" fill="#fff"/>
<ellipse cx="10" cy="11.5" rx="1.2" ry="0.9" fill="#222"/>
</svg>
<div class="tabt" style="left:469px;top:38px">main.go</div>
<svg class="abs" style="left:564px;top:56px" width="16" height="16" viewBox="0 0 16 16"><path d="M1,1 L15,15 M15,1 L1,15" stroke="#b9bdc0" stroke-width="1.8"/></svg>
<div class="tab" style="left:596px;width:234px;background:#dee8d7"></div>
<svg width="28" height="28" viewBox="0 0 28 28" style="position:absolute;left:618px;top:50px">
<circle cx="1.7" cy="4.6" r="1.7" fill="#76b8e3"/><circle cx="18.3" cy="4.6" r="1.7" fill="#76b8e3"/>
<path d="M2.2,5 C3,1.6 6.5,0.4 10,0.4 C13.5,0.4 17,1.6 17.8,5 L18,19 C18,24.5 14.5,27.8 10,27.8 C5.5,27.8 2,24.5 2,19 Z" fill="#76b8e3"/>
<circle cx="1.3" cy="14.4" r="1.4" fill="#c4997f"/><circle cx="18.7" cy="14.4" r="1.4" fill="#c4997f"/>
<circle cx="3.4" cy="26.4" r="1.4" fill="#c4997f"/><circle cx="16.6" cy="26.4" r="1.4" fill="#c4997f"/>
<path d="M2.2,5 C3,1.6 6.5,0.4 10,0.4 C13.5,0.4 17,1.6 17.8,5 L18,19 C18,24.5 14.5,27.8 10,27.8 C5.5,27.8 2,24.5 2,19 Z" fill="#76b8e3"/>
<circle cx="6.2" cy="8.8" r="3" fill="#fff"/><circle cx="13.4" cy="8.8" r="3" fill="#fff"/>
<circle cx="6.8" cy="8.8" r="1.5" fill="#000"/><circle cx="13.2" cy="8.8" r="1.5" fill="#000"/>
<rect x="9.1" y="12" width="1.8" height="2" fill="#fff"/>
<ellipse cx="10" cy="11.5" rx="1.2" ry="0.9" fill="#222"/>
<path d="M19.4,14 L13.3,18.8 L19.4,23.6 Z" fill="#e8672e"/><path d="M20.8,14 L27,18.8 L20.8,23.6 Z" fill="#59a869"/></svg>
<div class="tabt" style="left:651px;top:38px">main_test.go</div>
<svg class="abs" style="left:798px;top:56px" width="16" height="16" viewBox="0 0 16 16"><path d="M1,1 L15,15 M15,1 L1,15" stroke="#b9bdc0" stroke-width="1.8"/></svg>
<div class="tab" style="left:830px;width:236px;background:#eeeed6"></div>
<svg width="28" height="28" viewBox="0 0 28 28" style="position:absolute;left:852px;top:50px">
<circle cx="1.7" cy="4.6" r="1.7" fill="#76b8e3"/><circle cx="18.3" cy="4.6" r="1.7" fill="#76b8e3"/>
<path d="M2.2,5 C3,1.6 6.5,0.4 10,0.4 C13.5,0.4 17,1.6 17.8,5 L18,19 C18,24.5 14.5,27.8 10,27.8 C5.5,27.8 2,24.5 2,19 Z" fill="#76b8e3"/>
<circle cx="1.3" cy="14.4" r="1.4" fill="#c4997f"/><circle cx="18.7" cy="14.4" r="1.4" fill="#c4997f"/>
<circle cx="3.4" cy="26.4" r="1.4" fill="#c4997f"/><circle cx="16.6" cy="26.4" r="1.4" fill="#c4997f"/>
<path d="M2.2,5 C3,1.6 6.5,0.4 10,0.4 C13.5,0.4 17,1.6 17.8,5 L18,19 C18,24.5 14.5,27.8 10,27.8 C5.5,27.8 2,24.5 2,19 Z" fill="#76b8e3"/>
<circle cx="6.2" cy="8.8" r="3" fill="#fff"/><circle cx="13.4" cy="8.8" r="3" fill="#fff"/>
<circle cx="6.8" cy="8.8" r="1.5" fill="#000"/><circle cx="13.2" cy="8.8" r="1.5" fill="#000"/>
<rect x="9.1" y="12" width="1.8" height="2" fill="#fff"/>
<ellipse cx="10" cy="11.5" rx="1.2" ry="0.9" fill="#222"/>
</svg>
<div class="tabt" style="left:885px;top:38px">filesystem.go</div>
<svg class="abs" style="left:1034px;top:56px" width="16" height="16" viewBox="0 0 16 16"><path d="M1,1 L15,15 M15,1 L1,15" stroke="#b9bdc0" stroke-width="1.8"/></svg>
<div class="tab" style="left:1066px;width:176px;background:#f2f2f2"></div>
<svg width="26" height="32" viewBox="0 0 26 32" style="position:absolute;left:1086px;top:50px"><path d="M0,10 L10,10 L10,0 L20,0 L20,28 L0,28 Z" fill="#aeb8bd"/><path d="M0,8 L8,0 L8,8 Z" fill="#aeb8bd"/><rect x="4" y="12.4" width="12" height="1.6" fill="#3f4448"/><rect x="4" y="16.3" width="12" height="1.6" fill="#3f4448"/><rect x="4" y="20.1" width="8" height="1.6" fill="#3f4448"/></svg>
<div class="tabt" style="left:1121px;top:38px">go.mod</div>
<svg class="abs" style="left:1210px;top:56px" width="16" height="16" viewBox="0 0 16 16"><path d="M1,1 L15,15 M15,1 L1,15" stroke="#b9bdc0" stroke-width="1.8"/></svg>
<div class="tab" style="left:1242px;width:170px;background:#eeeed6"></div>
<svg width="28" height="28" viewBox="0 0 28 28" style="position:absolute;left:1264px;top:50px">
<circle cx="1.7" cy="4.6" r="1.7" fill="#76b8e3"/><circle cx="18.3" cy="4.6" r="1.7" fill="#76b8e3"/>
<path d="M2.2,5 C3,1.6 6.5,0.4 10,0.4 C13.5,0.4 17,1.6 17.8,5 L18,19 C18,24.5 14.5,27.8 10,27.8 C5.5,27.8 2,24.5 2,19 Z" fill="#76b8e3"/>
<circle cx="1.3" cy="14.4" r="1.4" fill="#c4997f"/><circle cx="18.7" cy="14.4" r="1.4" fill="#c4997f"/>
<circle cx="3.4" cy="26.4" r="1.4" fill="#c4997f"/><circle cx="16.6" cy="26.4" r="1.4" fill="#c4997f"/>
<path d="M2.2,5 C3,1.6 6.5,0.4 10,0.4 C13.5,0.4 17,1.6 17.8,5 L18,19 C18,24.5 14.5,27.8 10,27.8 C5.5,27.8 2,24.5 2,19 Z" fill="#76b8e3"/>
<circle cx="6.2" cy="8.8" r="3" fill="#fff"/><circle cx="13.4" cy="8.8" r="3" fill="#fff"/>
<circle cx="6.8" cy="8.8" r="1.5" fill="#000"/><circle cx="13.2" cy="8.8" r="1.5" fill="#000"/>
<rect x="9.1" y="12" width="1.8" height="2" fill="#fff"/>
<ellipse cx="10" cy="11.5" rx="1.2" ry="0.9" fill="#222"/>
</svg>
<div class="tabt" style="left:1297px;top:38px">app.go</div>
<svg class="abs" style="left:1380px;top:56px" width="16" height="16" viewBox="0 0 16 16"><path d="M1,1 L15,15 M15,1 L1,15" stroke="#b9bdc0" stroke-width="1.8"/></svg>
<div class="tab" style="left:1412px;width:216px;background:#eeeed6"></div>
<svg width="28" height="28" viewBox="0 0 28 28" style="position:absolute;left:1434px;top:50px">
<circle cx="1.7" cy="4.6" r="1.7" fill="#76b8e3"/><circle cx="18.3" cy="4.6" r="1.7" fill="#76b8e3"/>
<path d="M2.2,5 C3,1.6 6.5,0.4 10,0.4 C13.5,0.4 17,1.6 17.8,5 L18,19 C18,24.5 14.5,27.8 10,27.8 C5.5,27.8 2,24.5 2,19 Z" fill="#76b8e3"/>
<circle cx="1.3" cy="14.4" r="1.4" fill="#c4997f"/><circle cx="18.7" cy="14.4" r="1.4" fill="#c4997f"/>
<circle cx="3.4" cy="26.4" r="1.4" fill="#c4997f"/><circle cx="16.6" cy="26.4" r="1.4" fill="#c4997f"/>
<path d="M2.2,5 C3,1.6 6.5,0.4 10,0.4 C13.5,0.4 17,1.6 17.8,5 L18,19 C18,24.5 14.5,27.8 10,27.8 C5.5,27.8 2,24.5 2,19 Z" fill="#76b8e3"/>
<circle cx="6.2" cy="8.8" r="3" fill="#fff"/><circle cx="13.4" cy="8.8" r="3" fill="#fff"/>
<circle cx="6.8" cy="8.8" r="1.5" fill="#000"/><circle cx="13.2" cy="8.8" r="1.5" fill="#000"/>
<rect x="9.1" y="12" width="1.8" height="2" fill="#fff"/>
<ellipse cx="10" cy="11.5" rx="1.2" ry="0.9" fill="#222"/>
</svg>
<div class="tabt" style="left:1467px;top:38px">decoder.go</div>
<svg class="abs" style="left:1596px;top:56px" width="16" height="16" viewBox="0 0 16 16"><path d="M1,1 L15,15 M15,1 L1,15" stroke="#b9bdc0" stroke-width="1.8"/></svg>
<div class="tab" style="left:1628px;width:193px;background:#eeeed6"></div>
<svg width="28" height="28" viewBox="0 0 28 28" style="position:absolute;left:1650px;top:50px">
<circle cx="1.7" cy="4.6" r="1.7" fill="#76b8e3"/><circle cx="18.3" cy="4.6" r="1.7" fill="#76b8e3"/>
<path d="M2.2,5 C3,1.6 6.5,0.4 10,0.4 C13.5,0.4 17,1.6 17.8,5 L18,19 C18,24.5 14.5,27.8 10,27.8 C5.5,27.8 2,24.5 2,19 Z" fill="#76b8e3"/>
<circle cx="1.3" cy="14.4" r="1.4" fill="#c4997f"/><circle cx="18.7" cy="14.4" r="1.4" fill="#c4997f"/>
<circle cx="3.4" cy="26.4" r="1.4" fill="#c4997f"/><circle cx="16.6" cy="26.4" r="1.4" fill="#c4997f"/>
<path d="M2.2,5 C3,1.6 6.5,0.4 10,0.4 C13.5,0.4 17,1.6 17.8,5 L18,19 C18,24.5 14.5,27.8 10,27.8 C5.5,27.8 2,24.5 2,19 Z" fill="#76b8e3"/>
<circle cx="6.2" cy="8.8" r="3" fill="#fff"/><circle cx="13.4" cy="8.8" r="3" fill="#fff"/>
<circle cx="6.8" cy="8.8" r="1.5" fill="#000"/><circle cx="13.2" cy="8.8" r="1.5" fill="#000"/>
<rect x="9.1" y="12" width="1.8" height="2" fill="#fff"/>
<ellipse cx="10" cy="11.5" rx="1.2" ry="0.9" fill="#222"/>
</svg>
<div class="tabt" style="left:1683px;top:38px">cache.go</div>
<svg class="abs" style="left:1789px;top:56px" width="16" height="16" viewBox="0 0 16 16"><path d="M1,1 L15,15 M15,1 L1,15" stroke="#b9bdc0" stroke-width="1.8"/></svg>
<div class="tab" style="left:1821px;width:237px;background:#eeeed6"></div>
<svg width="28" height="28" viewBox="0 0 28 28" style="position:absolute;left:1843px;top:50px">
<circle cx="1.7" cy="4.6" r="1.7" fill="#76b8e3"/><circle cx="18.3" cy="4.6" r="1.7" fill="#76b8e3"/>
<path d="M2.2,5 C3,1.6 6.5,0.4 10,0.4 C13.5,0.4 17,1.6 17.8,5 L18,19 C18,24.5 14.5,27.8 10,27.8 C5.5,27.8 2,24.5 2,19 Z" fill="#76b8e3"/>
<circle cx="1.3" cy="14.4" r="1.4" fill="#c4997f"/><circle cx="18.7" cy="14.4" r="1.4" fill="#c4997f"/>
<circle cx="3.4" cy="26.4" r="1.4" fill="#c4997f"/><circle cx="16.6" cy="26.4" r="1.4" fill="#c4997f"/>
<path d="M2.2,5 C3,1.6 6.5,0.4 10,0.4 C13.5,0.4 17,1.6 17.8,5 L18,19 C18,24.5 14.5,27.8 10,27.8 C5.5,27.8 2,24.5 2,19 Z" fill="#76b8e3"/>
<circle cx="6.2" cy="8.8" r="3" fill="#fff"/><circle cx="13.4" cy="8.8" r="3" fill="#fff"/>
<circle cx="6.8" cy="8.8" r="1.5" fill="#000"/><circle cx="13.2" cy="8.8" r="1.5" fill="#000"/>
<rect x="9.1" y="12" width="1.8" height="2" fill="#fff"/>
<ellipse cx="10" cy="11.5" rx="1.2" ry="0.9" fill="#222"/>
</svg>
<div class="tabt" style="left:1876px;top:38px">bytebuffer.go</div>
<svg class="abs" style="left:2026px;top:56px" width="16" height="16" viewBox="0 0 16 16"><path d="M1,1 L15,15 M15,1 L1,15" stroke="#b9bdc0" stroke-width="1.8"/></svg>
<div class="tab" style="left:2058px;width:194px;background:#fdfde2"></div>
<svg width="28" height="28" viewBox="0 0 28 28" style="position:absolute;left:2080px;top:50px">
<circle cx="1.7" cy="4.6" r="1.7" fill="#76b8e3"/><circle cx="18.3" cy="4.6" r="1.7" fill="#76b8e3"/>
<path d="M2.2,5 C3,1.6 6.5,0.4 10,0.4 C13.5,0.4 17,1.6 17.8,5 L18,19 C18,24.5 14.5,27.8 10,27.8 C5.5,27.8 2,24.5 2,19 Z" fill="#76b8e3"/>
<circle cx="1.3" cy="14.4" r="1.4" fill="#c4997f"/><circle cx="18.7" cy="14.4" r="1.4" fill="#c4997f"/>
<circle cx="3.4" cy="26.4" r="1.4" fill="#c4997f"/><circle cx="16.6" cy="26.4" r="1.4" fill="#c4997f"/>
<path d="M2.2,5 C3,1.6 6.5,0.4 10,0.4 C13.5,0.4 17,1.6 17.8,5 L18,19 C18,24.5 14.5,27.8 10,27.8 C5.5,27.8 2,24.5 2,19 Z" fill="#76b8e3"/>
<circle cx="6.2" cy="8.8" r="3" fill="#fff"/><circle cx="13.4" cy="8.8" r="3" fill="#fff"/>
<circle cx="6.8" cy="8.8" r="1.5" fill="#000"/><circle cx="13.2" cy="8.8" r="1.5" fill="#000"/>
<rect x="9.1" y="12" width="1.8" height="2" fill="#fff"/>
<ellipse cx="10" cy="11.5" rx="1.2" ry="0.9" fill="#222"/>
</svg>
<div class="tabt" style="left:2113px;top:38px">router.go</div>
<svg class="abs" style="left:2220px;top:56px" width="16" height="16" viewBox="0 0 16 16"><path d="M1,1 L15,15 M15,1 L1,15" stroke="#b9bdc0" stroke-width="1.8"/></svg>
<div class="tab" style="left:2252px;width:178px;background:#eeeed6"></div>
<svg width="28" height="28" viewBox="0 0 28 28" style="position:absolute;left:2274px;top:50px">
<circle cx="1.7" cy="4.6" r="1.7" fill="#76b8e3"/><circle cx="18.3" cy="4.6" r="1.7" fill="#76b8e3"/>
<path d="M2.2,5 C3,1.6 6.5,0.4 10,0.4 C13.5,0.4 17,1.6 17.8,5 L18,19 C18,24.5 14.5,27.8 10,27.8 C5.5,27.8 2,24.5 2,19 Z" fill="#76b8e3"/>
<circle cx="1.3" cy="14.4" r="1.4" fill="#c4997f"/><circle cx="18.7" cy="14.4" r="1.4" fill="#c4997f"/>
<circle cx="3.4" cy="26.4" r="1.4" fill="#c4997f"/><circle cx="16.6" cy="26.4" r="1.4" fill="#c4997f"/>
<path d="M2.2,5 C3,1.6 6.5,0.4 10,0.4 C13.5,0.4 17,1.6 17.8,5 L18,19 C18,24.5 14.5,27.8 10,27.8 C5.5,27.8 2,24.5 2,19 Z" fill="#76b8e3"/>
<circle cx="6.2" cy="8.8" r="3" fill="#fff"/><circle cx="13.4" cy="8.8" r="3" fill="#fff"/>
<circle cx="6.8" cy="8.8" r="1.5" fill="#000"/><circle cx="13.2" cy="8.8" r="1.5" fill="#000"/>
<rect x="9.1" y="12" width="1.8" height="2" fill="#fff"/>
<ellipse cx="10" cy="11.5" rx="1.2" ry="0.9" fill="#222"/>
</svg>
<div class="tabt" style="left:2307px;top:38px">path.go</div>
<svg class="abs" style="left:2398px;top:56px" width="16" height="16" viewBox="0 0 16 16"><path d="M1,1 L15,15 M15,1 L1,15" stroke="#b9bdc0" stroke-width="1.8"/></svg>
<div class="abs" style="left:2058px;top:86px;width:194px;height:4px;background:#4083c9"></div>
<div class="abs" style="left:414px;top:90px;width:2124px;height:2px;background:#d1d1d1"></div>
<div class="abs" style="left:414px;top:92px;width:2124px;height:52px;background:#fef7d2"></div>
<div class="abs" style="left:414px;top:144px;width:2124px;height:2px;background:#d1d1d1"></div>
<div class="abs" style="left:434px;top:92px;line-height:52px;font-size:26px;letter-spacing:0.95px;white-space:pre">Editing code insight features are disabled for vendored files in libraries</div>
<div class="abs" style="left:2030px;top:92px;line-height:52px;font-size:26px;letter-spacing:0.95px;white-space:pre;color:#2470b3;letter-spacing:1.35px">Add 'github.com/gofiber/fiber/v2' to the project</div>
<div class="abs" style="left:414px;top:146px;width:129px;height:1644px;background:#f2f2f2"></div>
<div class="abs" style="left:543px;top:146px;width:2px;height:1644px;background:#d3d3d3"></div>
<div class="abs" style="left:545px;top:146px;width:1993px;height:1644px;background:#fff"></div>
<div class="abs" style="left:414px;top:1686px;width:129px;height:44px;background:#fbf9ec"></div>
<div class="abs" style="left:545px;top:1686px;width:11px;height:44px;background:#fbf9ec"></div>
<div class="abs" style="left:556px;top:1686px;width:1982px;height:44px;background:#a6d2ff"></div>
<div class="abs" style="left:616px;top:1422px;width:2px;height:368px;background:#e2e2e2"></div>
<div class="abs" style="left:2476px;top:146px;width:2px;height:1644px;background:#dedede"></div>
<div class="abs" style="left:2450px;top:150px;width:88px;height:44px;background:#fff"></div>
<div class="abs" style="left:2469px;top:150px;line-height:44px;font-size:22px;color:#6e6e6e;white-space:pre">Reader Mode</div>
<div class="ln" style="top:146px">209</div>
<div class="code" style="top:146px"><span class="k">func</span> (<span class="r">app</span> *<span class="t">App</span>) <span class="f">register</span>(method, pathRaw <span class="k">string</span>, handlers ...<span class="t">Handler</span>) <span class="t">Router</span> {</div>
<div class="ln" style="top:190px">210</div>
<div class="code" style="top:190px"><span class="c">    // Uppercase HTTP methods</span></div>
<div class="ln" style="top:234px">211</div>
<div class="code" style="top:234px">    method = <span class="p">utils</span>.<span class="f">ToUpper</span>(method)</div>
<div class="ln" style="top:278px">212</div>
<div class="code" style="top:278px"><span class="c">    // Check if the HTTP method is valid unless it&#x27;s USE</span></div>
<div class="ln" style="top:322px">213</div>
<div class="fold" style="left:1419px;top:322px;width:896px"></div>
<svg class="abs" style="left:2299.5px;top:338px" width="16" height="16" viewBox="0 0 16 16"><polygon points="8.00,0.40 9.11,5.32 13.37,2.63 10.68,6.89 15.60,8.00 10.68,9.11 13.37,13.37 9.11,10.68 8.00,15.60 6.89,10.68 2.63,13.37 5.32,9.11 0.40,8.00 5.32,6.89 2.63,2.63 6.89,5.32" fill="#3c473c"/></svg>
<div class="code" style="top:322px">    <span class="k">if</span> method != <span class="m">methodUse</span> &amp;&amp; <span class="f">methodInt</span>(method) == -<span class="n">1</span> <span class="fd">: fmt.Sprintf(&quot;add: invalid http method %s\n&quot;, method)  </span></div>
<div class="ln" style="top:366px">216</div>
<div class="code" style="top:366px"><span class="c">    // A route requires atleast one ctx handler</span></div>
<div class="ln" style="top:410px">217</div>
<div class="fold" style="left:971px;top:410px;width:928px"></div>
<svg class="abs" style="left:1883.5px;top:426px" width="16" height="16" viewBox="0 0 16 16"><polygon points="8.00,0.40 9.11,5.32 13.37,2.63 10.68,6.89 15.60,8.00 10.68,9.11 13.37,13.37 9.11,10.68 8.00,15.60 6.89,10.68 2.63,13.37 5.32,9.11 0.40,8.00 5.32,6.89 2.63,2.63 6.89,5.32" fill="#3c473c"/></svg>
<div class="code" style="top:410px">    <span class="k">if</span> <span class="k">len</span>(handlers) == <span class="n">0</span> <span class="fd">: fmt.Sprintf(&quot;missing handler in route: %s\n&quot;, pathRaw)  </span></div>
<div class="ln" style="top:454px">220</div>
<div class="code" style="top:454px"><span class="c">    // Cannot have an empty path</span></div>
<div class="ln" style="top:498px">221</div>
<div class="fold" style="left:891px;top:498px;width:80px"></div>
<div class="code" style="top:498px">    <span class="k">if</span> pathRaw == <span class="s">&quot;&quot;</span> <span class="fd">{...}</span></div>
<div class="ln" style="top:542px">224</div>
<div class="code" style="top:542px"><span class="c">    // Path always start with a &#x27;/&#x27;</span></div>
<div class="ln" style="top:586px">225</div>
<div class="fold" style="left:955px;top:586px;width:80px"></div>
<div class="code" style="top:586px">    <span class="k">if</span> pathRaw[<span class="n">0</span>] != <span class="s">&#x27;/&#x27;</span> <span class="fd">{...}</span></div>
<div class="ln" style="top:630px">228</div>
<div class="code" style="top:630px"><span class="c">    // Create a stripped path in-case sensitive / trailing slashes</span></div>
<div class="ln" style="top:674px">229</div>
<div class="code" style="top:674px">    pathPretty := pathRaw</div>
<div class="ln" style="top:718px">230</div>
<div class="code" style="top:718px"><span class="c">    // Case sensitive routing, all to lowercase</span></div>
<div class="ln" style="top:762px">231</div>
<div class="fold" style="left:1083px;top:762px;width:80px"></div>
<div class="code" style="top:762px">    <span class="k">if</span> !<span class="r">app</span>.config.CaseSensitive <span class="fd">{...}</span></div>
<div class="ln" style="top:806px">234</div>
<div class="code" style="top:806px"><span class="c">    // Strict routing, remove trailing slashes</span></div>
<div class="ln" style="top:850px">235</div>
<div class="fold" style="left:1451px;top:850px;width:80px"></div>
<div class="code" style="top:850px">    <span class="k">if</span> !<span class="r">app</span>.config.StrictRouting &amp;&amp; <span class="k">len</span>(pathPretty) &gt; <span class="n">1</span> <span class="fd">{...}</span></div>
<div class="ln" style="top:894px">238</div>
<div class="code" style="top:894px"><span class="c">    // Is layer a middleware?</span></div>
<div class="ln" style="top:938px">239</div>
<div class="code" style="top:938px">    <span class="k">var</span> isUse = method == <span class="m">methodUse</span></div>
<div class="ln" style="top:982px">240</div>
<div class="code" style="top:982px"><span class="c">    // Is path a direct wildcard?</span></div>
<div class="ln" style="top:1026px">241</div>
<div class="code" style="top:1026px">    <span class="k">var</span> isStar = pathPretty == <span class="s">&quot;/*&quot;</span></div>
<div class="ln" style="top:1070px">242</div>
<div class="code" style="top:1070px"><span class="c">    // Is path a root slash?</span></div>
<div class="ln" style="top:1114px">243</div>
<div class="code" style="top:1114px">    <span class="k">var</span> isRoot = pathPretty == <span class="s">&quot;/&quot;</span></div>
<div class="ln" style="top:1158px">244</div>
<div class="code" style="top:1158px"><span class="c">    // Parse path parameters</span></div>
<div class="ln" style="top:1202px">245</div>
<div class="code" style="top:1202px">    <span class="k">var</span> parsedRaw = <span class="f">parseRoute</span>(pathRaw)</div>
<div class="ln" style="top:1246px">246</div>
<div class="code" style="top:1246px">    <span class="k">var</span> parsedPretty = <span class="f">parseRoute</span>(pathPretty)</div>
<div class="ln" style="top:1290px">247</div>
<div class="code" style="top:1290px"></div>
<div class="ln" style="top:1334px">248</div>
<div class="code" style="top:1334px"><span class="c">    // Create route metadata without pointer</span></div>
<div class="ln" style="top:1378px">249</div>
<div class="code" style="top:1378px">    route := <span class="t">Route</span>{</div>
<div class="ln" style="top:1422px">250</div>
<div class="code" style="top:1422px"><span class="c">        // Router booleans</span></div>
<div class="ln" style="top:1466px">251</div>
<div class="code" style="top:1466px">        use:  isUse,</div>
<div class="ln" style="top:1510px">252</div>
<div class="code" style="top:1510px">        star: isStar,</div>
<div class="ln" style="top:1554px">253</div>
<div class="code" style="top:1554px">        root: isRoot,</div>
<div class="ln" style="top:1598px">254</div>
<div class="code" style="top:1598px"></div>
<div class="ln" style="top:1642px">255</div>
<div class="code" style="top:1642px"><span class="c">        // Path data</span></div>
<div class="ln" style="top:1686px">256</div>
<div class="code" style="top:1686px">        path:        <span class="f">RemoveEscapeChar</span>(pathPretty),</div>
<div class="ln" style="top:1730px">257</div>
<div class="code" style="top:1730px">        routeParser: parsedPretty,</div>
<div class="ln" style="top:1774px">258</div>
<div class="code" style="top:1774px">        Params:      parsedRaw.params,</div>
<div class="abs" style="left:907px;top:1690px;width:3px;height:36px;background:#000"></div>
<div class="abs" style="left:535px;top:337px;width:18px;height:18px;border:2px solid #d0d0d0;background:#fff"><div class="abs" style="left:3px;top:6px;width:8px;height:2px;background:#d0d0d0"></div><div class="abs" style="left:6px;top:3px;width:2px;height:8px;background:#d0d0d0"></div></div>
<div class="abs" style="left:535px;top:425px;width:18px;height:18px;border:2px solid #d0d0d0;background:#fff"><div class="abs" style="left:3px;top:6px;width:8px;height:2px;background:#d0d0d0"></div><div class="abs" style="left:6px;top:3px;width:2px;height:8px;background:#d0d0d0"></div></div>
<div class="abs" style="left:535px;top:513px;width:18px;height:18px;border:2px solid #d0d0d0;background:#fff"><div class="abs" style="left:3px;top:6px;width:8px;height:2px;background:#d0d0d0"></div><div class="abs" style="left:6px;top:3px;width:2px;height:8px;background:#d0d0d0"></div></div>
<div class="abs" style="left:535px;top:601px;width:18px;height:18px;border:2px solid #d0d0d0;background:#fff"><div class="abs" style="left:3px;top:6px;width:8px;height:2px;background:#d0d0d0"></div><div class="abs" style="left:6px;top:3px;width:2px;height:8px;background:#d0d0d0"></div></div>
<div class="abs" style="left:535px;top:777px;width:18px;height:18px;border:2px solid #d0d0d0;background:#fff"><div class="abs" style="left:3px;top:6px;width:8px;height:2px;background:#d0d0d0"></div><div class="abs" style="left:6px;top:3px;width:2px;height:8px;background:#d0d0d0"></div></div>
<div class="abs" style="left:535px;top:865px;width:18px;height:18px;border:2px solid #d0d0d0;background:#fff"><div class="abs" style="left:3px;top:6px;width:8px;height:2px;background:#d0d0d0"></div><div class="abs" style="left:6px;top:3px;width:2px;height:8px;background:#d0d0d0"></div></div>
<svg class="abs" style="left:535px;top:161px" width="18" height="24" viewBox="0 0 18 24"><path d="M1,1 L17,1 L17,15 L9,23 L1,15 Z" fill="#fff" stroke="#d0d0d0" stroke-width="2"/><rect x="5" y="8" width="8" height="2" fill="#d0d0d0"/></svg>
<svg class="abs" style="left:535px;top:1393px" width="18" height="24" viewBox="0 0 18 24"><path d="M1,1 L17,1 L17,15 L9,23 L1,15 Z" fill="#fff" stroke="#d0d0d0" stroke-width="2"/><rect x="5" y="8" width="8" height="2" fill="#d0d0d0"/></svg>
</div></body></html>
